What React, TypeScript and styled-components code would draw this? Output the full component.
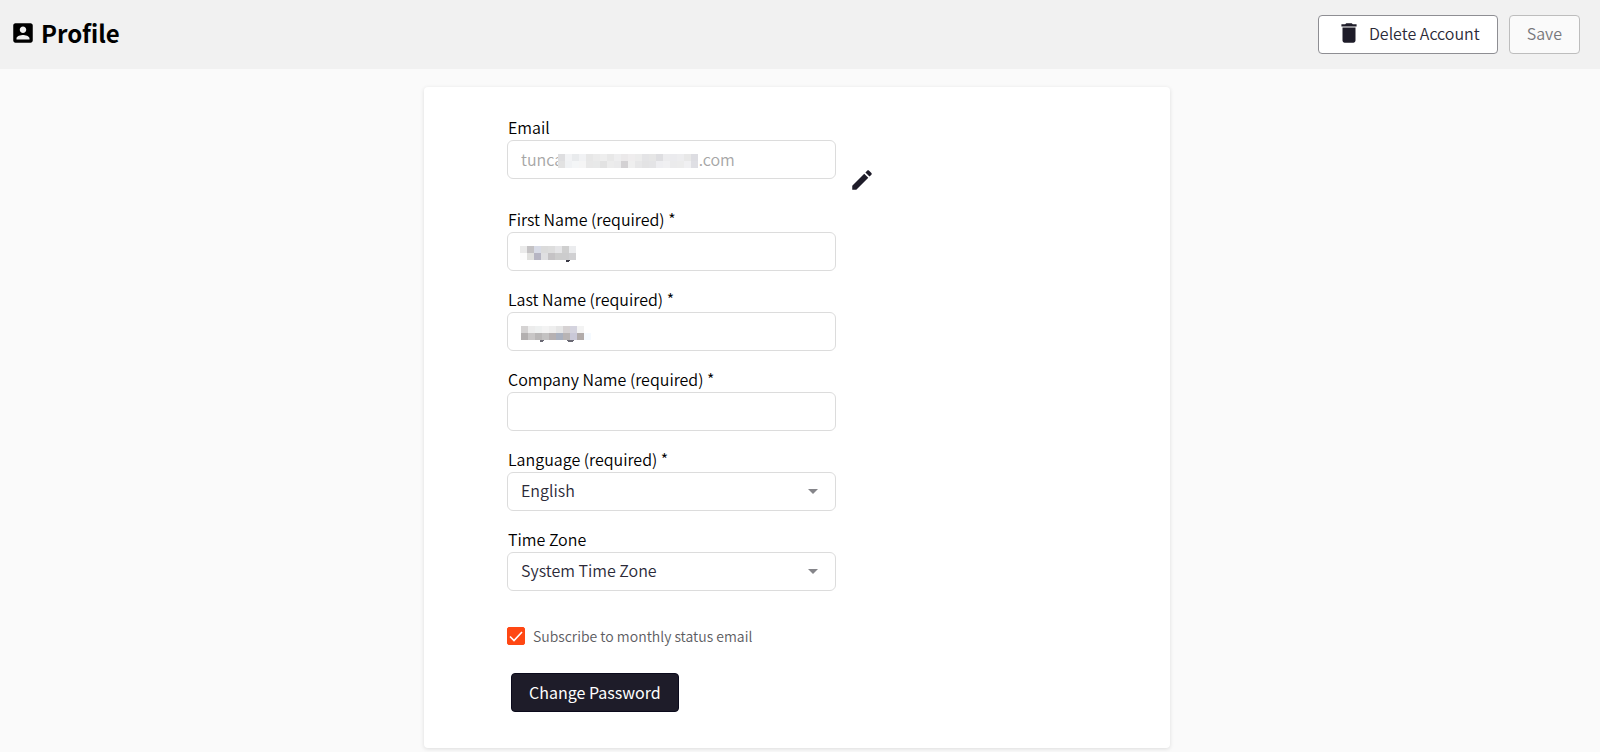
import React, { useState } from 'react';
import styled, { createGlobalStyle } from 'styled-components';

const GlobalStyle = createGlobalStyle`
  *, *::before, *::after { box-sizing: border-box; }
  body {
    margin: 0;
    background: #fafafa;
    color: #000;
    font-family: 'Noto Sans CJK SC', 'Noto Sans', sans-serif;
    font-size: 16px;
    font-weight: 350;
    line-height: 24px;
  }
  button, input, select { font: inherit; }
`;

const Header = styled.header`
  display: flex;
  align-items: center;
  justify-content: space-between;
  height: 69px;
  padding: 0 20px 0 10px;
  background: #f1f1f1;
`;

const Title = styled.h1`
  display: flex;
  align-items: center;
  gap: 5px;
  margin: 0;
  padding-bottom: 3px;
  font-size: 24px;
  line-height: 32px;
  font-weight: 700;
`;

const Actions = styled.div`
  display: flex;
  gap: 11px;
  padding-bottom: 1px;
`;

const Button = styled.button<{ $variant?: 'outline' | 'solid' }>`
  display: inline-flex;
  align-items: center;
  gap: 7px;
  height: 39px;
  padding: 0 17px 2px;
  border: 1px solid ${p => (p.$variant === 'solid' ? '#0b0a1c' : '#8e8e93')};
  border-radius: 4px;
  background: ${p => (p.$variant === 'solid' ? '#1e1c29' : '#fff')};
  color: ${p => (p.$variant === 'solid' ? '#fff' : '#2b2a38')};
  font-weight: ${p => (p.$variant === 'solid' ? 400 : 350)};
  white-space: nowrap;

  &:disabled {
    border-color: #bdbdbd;
    background: #fafafa;
    color: #77777b;
  }
`;

const Main = styled.main`
  padding: 18px 6px 4px 0;
`;

const Card = styled.form`
  width: 100%;
  max-width: 746px;
  margin: 0 auto;
  padding: 29px 83px 36px;
  border-radius: 4px;
  background: #fff;
  box-shadow: 0 1px 4px rgba(0, 0, 0, 0.12);
`;

const Fields = styled.div`
  display: flex;
  flex-direction: column;
  gap: 17px;
`;

const EmailRow = styled.div`
  display: flex;
  align-items: flex-end;
  gap: 13px;
  padding-bottom: 12px;
`;

const Field = styled.div`
  display: flex;
  flex-direction: column;
  width: 329px;
  max-width: 100%;
`;

const Label = styled.label`
  padding: 0 0 2px 1px;
  line-height: 22px;
`;

const Control = styled.div`
  position: relative;
`;

const Input = styled.input`
  display: block;
  width: 100%;
  height: 39px;
  padding: 0 13px 2px;
  border: 1px solid #dcdcdc;
  border-radius: 6px;
  background: #fff;
  color: #2b2a38;
  outline: none;

  &:disabled { color: #a6a6a6; }
`;

const Select = styled.select`
  display: block;
  width: 100%;
  height: 39px;
  padding: 0 40px 3px 13px;
  border: 1px solid #dcdcdc;
  border-radius: 6px;
  background: #fff;
  color: #2b2a38;
  appearance: none;
  outline: none;
`;

const Arrow = styled.svg`
  position: absolute;
  top: 17px;
  right: 18px;
  pointer-events: none;
`;

const MaskSvg = styled.svg<{ $left: number }>`
  position: absolute;
  top: 14px;
  left: ${p => p.$left}px;
  pointer-events: none;
`;

const IconButton = styled.button`
  display: flex;
  margin-bottom: -14px;
  padding: 0;
  border: 0;
  background: none;
  color: #1e1c29;
`;

const CheckRow = styled.label`
  display: flex;
  align-items: center;
  gap: 8px;
  width: fit-content;
  margin-top: 33px;
  color: #5c5c61;
  font-size: 14px;
`;

const CheckBox = styled.span`
  position: relative;
  display: flex;
  width: 18px;
  height: 18px;
`;

const CheckInput = styled.input`
  appearance: none;
  width: 18px;
  height: 18px;
  margin: 0;
  border: 1px solid #ff4713;
  border-radius: 2px;
  background: #fff;

  &:checked { background: #ff4713; }
`;

const CheckMark = styled.svg`
  position: absolute;
  inset: 0;
  pointer-events: none;
`;

const Footer = styled.div`
  margin: 25px 0 0 4px;
`;

function Mask({ rows, left, children }: {
  rows: string[][];
  left: number;
  children?: React.ReactNode;
}) {
  return (
    <MaskSvg $left={left} width={7 * rows[0].length} height={18} shapeRendering="crispEdges" aria-hidden="true">
      {rows.map((row, y) =>
        row.map((fill, x) => <rect key={`${x}-${y}`} x={x * 7} y={y * 7} width={7} height={7} fill={fill} />),
      )}
      {children}
    </MaskSvg>
  );
}

const emailMask = [
  ['#dedee0', '#f2f3f5', '#e9ebed', '#f1f2f4', '#e7e7e7', '#ebebeb', '#eeeeee', '#e8e8e8', '#eeeeef', '#ebe9ea', '#efedee', '#ececec', '#e4e4e6', '#e6e6e6', '#dedee1', '#ececee', '#ebebee', '#ededef', '#e8e8e8', '#dddde2'],
  ['#e2e2e2', '#f0f2f4', '#f4f6f7', '#f5f5f5', '#e8e8e8', '#e8e9e9', '#e2e2e2', '#ececec', '#eaeaeb', '#d3d1d3', '#efefef', '#e7e7e8', '#e3e3e4', '#e4e4e6', '#eeeef1', '#f0f0f2', '#ebebec', '#ececec', '#f0f0f2', '#dfdfe4'],
];
const firstMask = [
  ['#eaeaea', '#c4c2c4', '#d8dbe6', '#dbdbdb', '#dddddd', '#e5e5e7', '#cfcfcf', '#ebecee'],
  ['#fcfcfc', '#e0e0de', '#b6b5c3', '#dfdfe1', '#c5c3c5', '#cccccc', '#cccccd', '#d0d0d2'],
];
const lastMask = [
  ['#d5d3d3', '#ececec', '#eef0f0', '#f3f3f3', '#eeeeee', '#e6e6e6', '#d6d2d3', '#d4d3de', '#f3f3f3', '#ffffff'],
  ['#b3b0b0', '#c8c6c6', '#b9b7b7', '#c3c2c2', '#b6b1b2', '#aab1bf', '#b8b4b4', '#cac9d8', '#b1abaa', '#f5faff'],
];

const AccountIcon = () => (
  <svg width="26" height="26" viewBox="0 0 24 24" fill="currentColor" aria-hidden="true">
    <path d="M3 5v14c0 1.1.89 2 2 2h14c1.1 0 2-.9 2-2V5c0-1.1-.9-2-2-2H5c-1.11 0-2 .9-2 2zm12 4c0 1.66-1.34 3-3 3s-3-1.34-3-3 1.34-3 3-3 3 1.34 3 3zm-9 8c0-2 4-3.100 6-3.100s6 1.100 6 3.100v1H6v-1z" />
  </svg>
);

const TrashIcon = () => (
  <svg width="26" height="26" viewBox="0 0 24 24" fill="#1e1c29" aria-hidden="true">
    <path d="M6 19c0 1.100.9 2 2 2h8c1.100 0 2-.9 2-2V7H6v12zM19 4h-3.500l-1-1h-5l-1 1H5v2h14V4z" />
  </svg>
);

const PencilIcon = () => (
  <svg width="26" height="26" viewBox="0 0 24 24" fill="currentColor" aria-hidden="true">
    <path d="M3 17.250V21h3.750L17.810 9.940l-3.750-3.750L3 17.250zM20.710 7.040c.39-.39.39-1.020 0-1.410l-2.340-2.340c-.39-.39-1.020-.39-1.410 0l-1.830 1.830 3.750 3.750 1.830-1.830z" />
  </svg>
);

function SelectField({ id, label, options }: { id: string; label: string; options: string[] }) {
  return (
    <Field>
      <Label htmlFor={id}>{label}</Label>
      <Control>
        <Select id={id}>
          {options.map(o => <option key={o}>{o}</option>)}
        </Select>
        <Arrow width="10" height="5" viewBox="0 0 10 5" aria-hidden="true">
          <path d="M0 0h10L5 5z" fill="#85858a" />
        </Arrow>
      </Control>
    </Field>
  );
}

function TextField({ id, label, children }: { id: string; label: string; children?: React.ReactNode }) {
  return (
    <Field>
      <Label htmlFor={id}>{label}</Label>
      <Control>
        <Input id={id} type="text" />
        {children}
      </Control>
    </Field>
  );
}

export default function App() {
  const [subscribed, setSubscribed] = useState(true);
  return (
    <>
      <GlobalStyle />
      <Header>
        <Title><AccountIcon />Profile</Title>
        <Actions>
          <Button type="button"><TrashIcon />Delete Account</Button>
          <Button type="button" disabled>Save</Button>
        </Actions>
      </Header>
      <Main>
        <Card>
          <Fields>
            <EmailRow>
              <Field>
                <Label htmlFor="email">Email</Label>
                <Control>
                  <Input id="email" type="text" disabled defaultValue={`tunca${'\u00a0'.repeat(38)}.com`} />
                  <Mask rows={emailMask} left={51} />
                </Control>
              </Field>
              <IconButton type="button" aria-label="Edit email"><PencilIcon /></IconButton>
            </EmailRow>
            <TextField id="first" label="First Name (required) *">
              <Mask rows={firstMask} left={13}>
                <path d="M46 14h4l-2 2h-2z" fill="#3c3b47" />
              </Mask>
            </TextField>
            <TextField id="last" label="Last Name (required) *">
              <Mask rows={lastMask} left={14}>
                <path d="M19 14h4l-2 2h-2zM45 14h8l-2 2h-4z" fill="#6a6974" />
              </Mask>
            </TextField>
            <TextField id="company" label="Company Name (required) *" />
            <SelectField id="language" label="Language (required) *" options={['English']} />
            <SelectField id="zone" label="Time Zone" options={['System Time Zone']} />
          </Fields>
          <CheckRow>
            <CheckBox>
              <CheckInput type="checkbox" checked={subscribed} onChange={e => setSubscribed(e.target.checked)} />
              <CheckMark width="18" height="18" viewBox="0 0 18 18" aria-hidden="true">
                <path d="M3 9.500l4 4L15 5" fill="none" stroke="#fff" strokeWidth="1.600" />
              </CheckMark>
            </CheckBox>
            Subscribe to monthly status email
          </CheckRow>
          <Footer>
            <Button type="button" $variant="solid">Change Password</Button>
          </Footer>
        </Card>
      </Main>
    </>
  );
}
